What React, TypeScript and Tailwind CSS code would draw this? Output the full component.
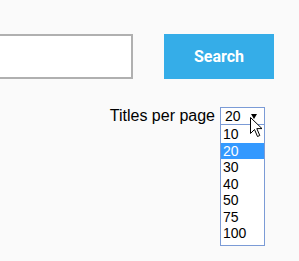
import { useState } from 'react'

const options = ['10', '20', '30', '40', '50', '75', '100']

function Cursor() {
  return (
    <svg
      width="13"
      height="21"
      viewBox="0 0 13 21"
      className="absolute left-[30px] top-[10px] pointer-events-none"
    >
      <path
        d="M0.5 0.5 L0.5 16.5 L4.5 12.5 L7.5 19.5 L9.8 18.5 L6.8 11.6 L12 11.6 Z"
        fill="#fff"
        stroke="#000"
        strokeWidth="1"
        strokeLinejoin="miter"
      />
    </svg>
  )
}

export default function App() {
  const [value, setValue] = useState('20')

  return (
    <div className="w-[299px] h-[261px] overflow-hidden bg-[#fafafa] font-['Liberation_Sans',Arial,sans-serif]">
      <div className="flex pt-[34px]">
        <input
          type="text"
          className="-ml-[67px] w-[200px] h-[45px] bg-white border-2 border-[#b0b0b0] outline-none"
        />
        <button
          type="button"
          className="ml-[31px] w-[110px] h-[45px] bg-[#35ade8] text-white text-[16px] font-bold font-['Roboto',sans-serif]"
        >
          Search
        </button>
      </div>

      <div className="flex justify-end items-center pr-[34px] mt-[28px]">
        <span className="text-[16px] text-black leading-[18px] mr-[5px]">
          Titles per page
        </span>
        <div className="relative">
          <div className="w-[45px] h-[18px] border border-[#7b9bd6] bg-white flex items-center justify-between pl-[4px] pr-[7px] text-[14px] text-black leading-none">
            <span>{value}</span>
            <span className="w-0 h-0 border-l-[3px] border-r-[3px] border-t-[5px] border-l-transparent border-r-transparent border-t-black" />
          </div>
          <ul className="absolute left-0 top-[17px] w-[45px] border border-[#7b9bd6] bg-white pt-[1px] pb-[3px] text-[14px]">
            {options.map((o) => (
              <li
                key={o}
                onClick={() => setValue(o)}
                className={`h-[16.5px] leading-[16.5px] pl-[2px] ${
                  o === value ? 'bg-[#3399ff] text-white' : 'text-black'
                }`}
              >
                {o}
              </li>
            ))}
          </ul>
          <Cursor />
        </div>
      </div>
    </div>
  )
}
